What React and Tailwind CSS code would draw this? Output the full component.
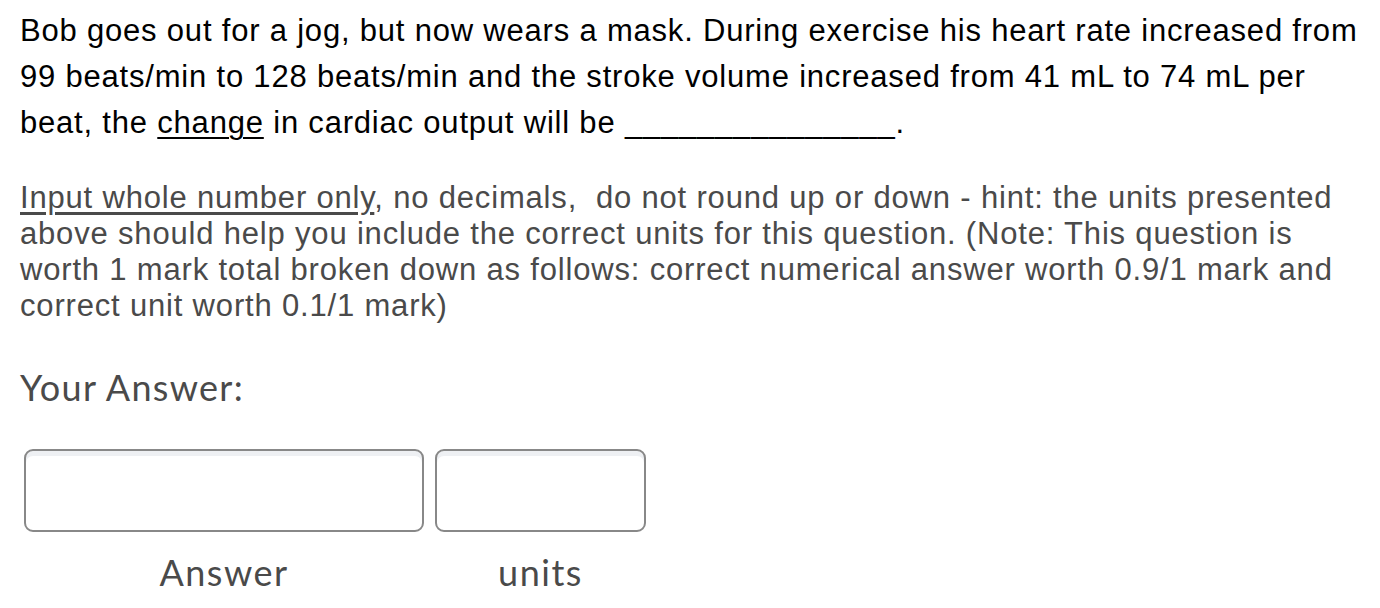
import React from "react";

const Question = () => {
    return (
        <div className="w-[1380px] h-[608px] bg-white overflow-hidden pl-[20px] pt-[8px]">
            <p className="whitespace-nowrap font-['Liberation_Sans',Arial,sans-serif] text-[31px] leading-[46px] tracking-[0.8px] text-black">
                Bob goes out for a jog, but now wears a mask. During exercise his heart rate increased from
                <br />
                99 beats/min to 128 beats/min and the stroke volume increased from 41 mL to 74 mL per
                <br />
                beat, the <span className="underline underline-offset-4 decoration-2">change</span> in cardiac output will be{" "}
                _______________.
            </p>
            <p className="mt-[34px] whitespace-nowrap font-['Liberation_Sans',Arial,sans-serif] text-[31px] leading-[36px] tracking-[0.82px] text-[#4a4a4a]">
                <span className="underline underline-offset-4">Input whole number only</span>, no decimals,&nbsp; do not round up or down - hint: the units presented
                <br />
                above should help you include the correct units for this question. (Note: This question is
                <br />
                worth 1 mark total broken down as follows: correct numerical answer worth 0.9/1 mark and
                <br />
                correct unit worth 0.1/1 mark)
            </p>
            <div className="mt-[43px] font-['Lato',sans-serif] text-[36px] leading-[40px] tracking-[1.3px] text-[#4a4a4a]">
                Your Answer:
            </div>
            <div className="mt-[42px] pl-[4px] flex gap-[11px]">
                <div className="flex flex-col items-center">
                    <div className="w-[400px] h-[83px] rounded-[9px] border-2 border-[#888888] bg-white shadow-[inset_0_5px_0_#eef0f3]" />
                    <div className="mt-[20px] font-['Lato',sans-serif] text-[36px] leading-[40px] tracking-[1.5px] text-[#4a4a4a]">
                        Answer
                    </div>
                </div>
                <div className="flex flex-col items-center">
                    <div className="w-[211px] h-[83px] rounded-[9px] border-2 border-[#888888] bg-white shadow-[inset_0_5px_0_#eef0f3]" />
                    <div className="mt-[20px] font-['Lato',sans-serif] text-[36px] leading-[40px] tracking-[1.5px] text-[#4a4a4a]">
                        units
                    </div>
                </div>
            </div>
        </div>
    );
};

export default Question;
